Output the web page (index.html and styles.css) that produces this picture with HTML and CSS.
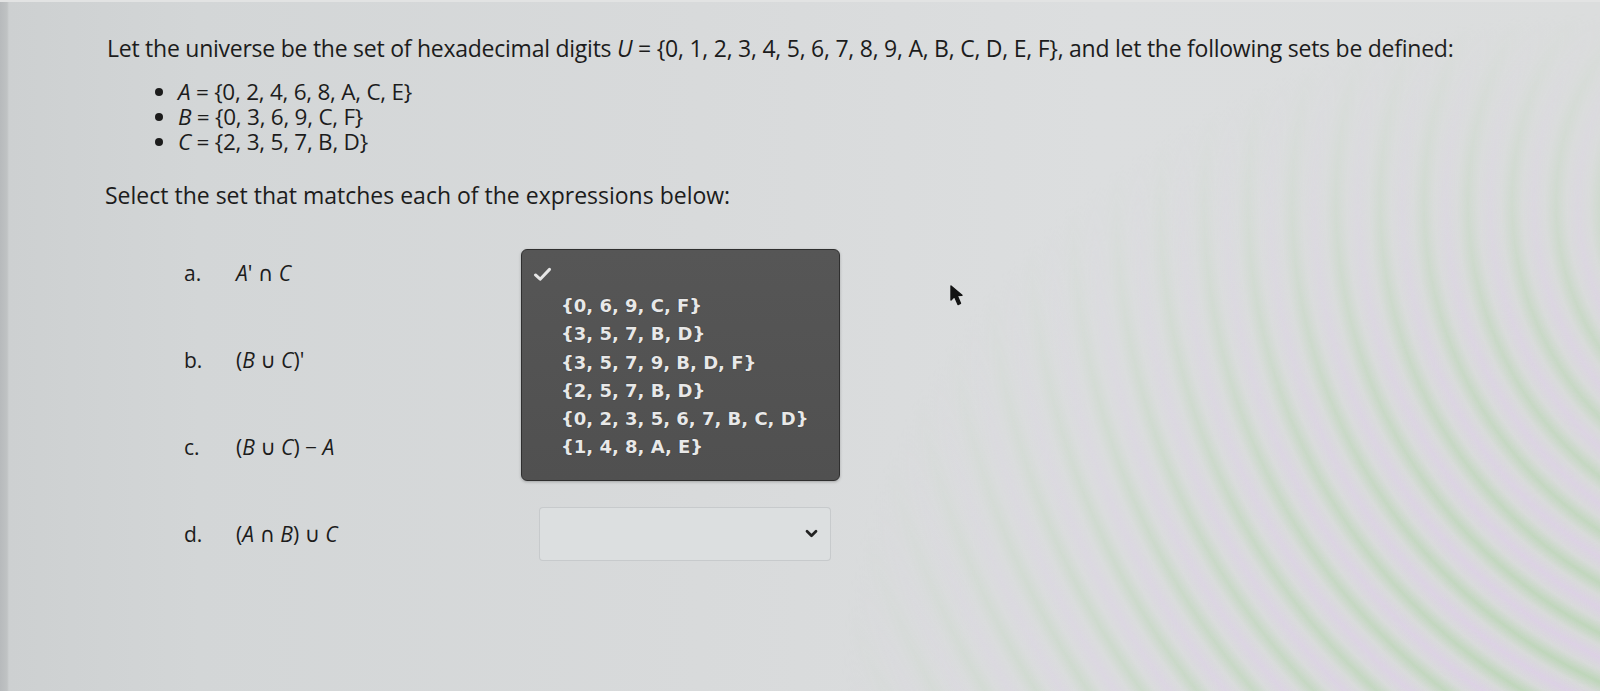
FILE: index.html
```html
<!DOCTYPE html>
<html lang="en">
<head>
<meta charset="utf-8">
<title>Set expressions</title>
<link rel="stylesheet" href="styles.css">
</head>
<body>
<div class="screen">
  <div class="page">
    <p class="intro">Let the universe be the set of hexadecimal digits <i>U</i> = {0, 1, 2, 3, 4, 5, 6, 7, 8, 9, A, B, C, D, E, F}, and let the following sets be defined:</p>
    <ul class="sets">
      <li><i>A</i> = {0, 2, 4, 6, 8, A, C, E}</li>
      <li><i>B</i> = {0, 3, 6, 9, C, F}</li>
      <li><i>C</i> = {2, 3, 5, 7, B, D}</li>
    </ul>
    <p class="prompt">Select the set that matches each of the expressions below:</p>

    <div class="questions">
      <div class="row">
        <span class="label">a.</span>
        <span class="expr"><i>A</i>' ∩ <i>C</i></span>
        <span class="slot"></span>
      </div>
      <div class="row">
        <span class="label">b.</span>
        <span class="expr">(<i>B</i> ∪ <i>C</i>)'</span>
        <span class="slot"></span>
      </div>
      <div class="row">
        <span class="label">c.</span>
        <span class="expr">(<i>B</i> ∪ <i>C</i>) − <i>A</i></span>
        <span class="slot"></span>
      </div>
      <div class="row">
        <span class="label">d.</span>
        <span class="expr">(<i>A</i> ∩ <i>B</i>) ∪ <i>C</i></span>
        <span class="slot">
          <span class="select">
            <svg class="chevron" viewBox="0 0 14 10" width="13" height="9"><path d="M2 2.5 L7 7.5 L12 2.5" fill="none" stroke="#222" stroke-width="3" stroke-linecap="round" stroke-linejoin="round"/></svg>
          </span>
        </span>
      </div>

      <div class="menu">
        <div class="menu-check">
          <svg viewBox="0 0 20 16" width="19" height="15"><path d="M2.5 8.5 L7.5 13 L17.5 2.5" fill="none" stroke="#e6e6e6" stroke-width="3.2" stroke-linecap="round" stroke-linejoin="round"/></svg>
        </div>
        <div class="opt">{0, 6, 9, C, F}</div>
        <div class="opt">{3, 5, 7, B, D}</div>
        <div class="opt">{3, 5, 7, 9, B, D, F}</div>
        <div class="opt">{2, 5, 7, B, D}</div>
        <div class="opt">{0, 2, 3, 5, 6, 7, B, C, D}</div>
        <div class="opt">{1, 4, 8, A, E}</div>
      </div>
    </div>
  </div>

  <svg class="cursor" viewBox="0 0 14 22" width="14" height="22"><path d="M1 1 L1 15 L4.5 11.5 L8 19.5 L10.5 18.3 L7.2 10.6 L12 10.3 Z" fill="#141414" stroke="#141414" stroke-width="1.4" stroke-linejoin="round"/></svg>
</div>
</body>
</html>
```

FILE: styles.css
```css
html, body {
  margin: 0;
  padding: 0;
}

body {
  width: 1600px;
  height: 691px;
  overflow: hidden;
  font-family: "Open Sans", "Noto Sans", "DejaVu Sans", sans-serif;
  color: #1c1c1c;
  background:
    linear-gradient(to right, #b7babc 0, #bfc2c3 7px, #cdd0d1 9px, #d3d6d7 200px, #d8dadb 700px, #dcdedf 1100px, #dbdddd 1600px);
}

.screen {
  position: relative;
  width: 1600px;
  height: 691px;
  border-top: 2px solid #e2e3e3;
  box-sizing: border-box;
}

.screen::after {
  content: "";
  position: absolute;
  inset: 0;
  pointer-events: none;
  background: repeating-radial-gradient(circle at 1820px 200px,
    rgba(184, 212, 178, 0.85) 0px,
    rgba(208, 212, 208, 0.3) 11px,
    rgba(220, 206, 230, 0.85) 22px,
    rgba(208, 212, 208, 0.3) 33px,
    rgba(184, 212, 178, 0.85) 44px);
  -webkit-mask-image: radial-gradient(ellipse 760px 680px at 1600px 691px, #000 0, rgba(0,0,0,0.6) 55%, transparent 100%);
  mask-image: radial-gradient(ellipse 760px 680px at 1600px 691px, #000 0, rgba(0,0,0,0.6) 55%, transparent 100%);
}

.page {
  padding: 31px 0 0 107px;
}

.intro {
  margin: 0;
  font-size: 23px;
  line-height: 30px;
  letter-spacing: -0.25px;
}

.sets {
  margin: 16px 0 0 0;
  padding-left: 71px;
  font-size: 22.5px;
  line-height: 24px;
  letter-spacing: -0.25px;
  list-style: disc;
}

.sets li::marker {
  font-size: 22px;
}

.prompt {
  margin: 26px 0 0 -2px;
  font-size: 23px;
  line-height: 30px;
}

.questions {
  position: relative;
  margin-top: 19px;
  padding-left: 77px;
}

.row {
  display: grid;
  grid-template-columns: 52px 303px 292px;
  align-items: center;
  height: 87px;
  font-size: 21px;
}

.label {
  font-size: 21px;
}

.expr i, .sets i, .intro i {
  font-style: italic;
}

.slot {
  display: flex;
  align-items: center;
}

.select {
  display: flex;
  align-items: center;
  justify-content: flex-end;
  box-sizing: border-box;
  width: 292px;
  height: 54px;
  padding-right: 12px;
  border: 1px solid rgba(160, 164, 166, 0.35);
  border-radius: 4px;
  background: #dcdfe0;
}

.menu {
  position: absolute;
  left: 414px;
  top: 20px;
  box-sizing: border-box;
  width: 319px;
  height: 232px;
  padding: 6px 0 0 0;
  border: 1px solid #2f2f2f;
  border-radius: 6px;
  background: linear-gradient(#565656, #505050);
  box-shadow: 0 1px 3px rgba(0, 0, 0, 0.25);
}

.menu-check {
  height: 36px;
  padding-left: 11px;
  display: flex;
  align-items: center;
}

.opt {
  padding-left: 39px;
  font-family: "DejaVu Sans", "Liberation Sans", sans-serif;
  font-weight: bold;
  font-size: 18px;
  line-height: 28.3px;
  color: #e8e8e8;
  text-shadow: 0 0 1px #2a2a2a;
}

.cursor {
  position: absolute;
  left: 950px;
  top: 283px;
}
```
